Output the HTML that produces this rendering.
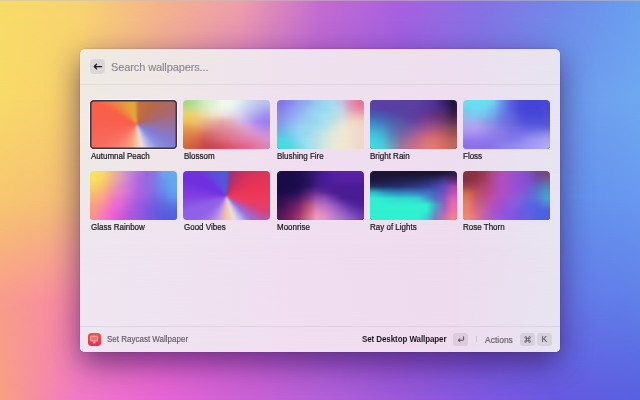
<!DOCTYPE html><html><head><meta charset="utf-8"><style>
html,body{margin:0;padding:0;width:640px;height:400px;overflow:hidden;}
body{position:relative;font-family:"Liberation Sans",sans-serif;background:#b070d8;}
.l,#search,.ft{will-change:transform;}
.ft{transform:scale(1,1.14);transform-origin:0 10.5px;}
.ly{position:absolute;left:0;top:0;width:100%;height:100%;}
#bg{position:absolute;left:0;top:0;width:640px;height:400px;}
#shadow{position:absolute;left:80px;top:48.5px;width:480px;height:303.5px;border-radius:6px;box-shadow:0 8px 32px 0 rgba(60,20,90,0.34), 0 14px 28px -2px rgba(60,20,90,0.46), 0 0 2px rgba(40,20,60,0.25);}
#win{position:absolute;left:80px;top:48.5px;width:480px;height:303.5px;border-radius:5px;overflow:hidden;}
#winbg{position:absolute;left:0;top:0;width:480px;height:303.5px;}
#tint{position:absolute;left:0;top:0;width:480px;height:303.5px;background:rgba(237,234,240,0.9);}
#sep1{position:absolute;left:0;top:35px;width:480px;height:1px;background:rgba(0,0,0,0.06);}
#sep2{position:absolute;left:0;top:277.5px;width:480px;height:1px;background:rgba(0,0,0,0.06);}
#back{position:absolute;left:10.2px;top:10.5px;width:15px;height:15px;border-radius:4px;background:#dcd6d4;}
#search{position:absolute;left:31px;top:11px;font-size:11px;line-height:15px;color:#8a8290;-webkit-text-stroke:0.12px #8a8290;letter-spacing:-0.11px;white-space:nowrap;}
.t{position:absolute;width:87px;height:49px;border-radius:4px;overflow:hidden;}
.l{position:absolute;font-size:8px;line-height:10px;color:#1a1620;-webkit-text-stroke:0.2px #1a1620;transform:scale(1,1.14);transform-origin:0 8px;white-space:nowrap;}
.k{will-change:transform;position:absolute;top:284px;height:13.3px;border-radius:3px;background:rgba(40,20,50,0.085);font-size:8px;line-height:13.3px;text-align:center;color:#4a4450;-webkit-text-stroke:0.2px #4a4450;}
</style></head><body>
<div id="bg"><div class="ly" style="background:linear-gradient(90deg,#f8dc68 0.00%,#f8d470 12.50%,#f4b48a 25.00%,#f0a0a8 37.50%,#c46cd0 50.00%,#a860e0 62.50%,#8870e4 75.00%,#7088e8 87.50%,#68a0f0 100.00%)"></div><div class="ly" style="background:linear-gradient(90deg,#f8da68 0.00%,#f8d070 12.50%,#f0a8a0 25.00%,#d478c8 37.50%,#b464d8 50.00%,#9860e0 62.50%,#7c78e4 75.00%,#6c98ec 87.50%,#70a8f0 100.00%);-webkit-mask-image:linear-gradient(180deg,rgba(0,0,0,0) 0.00%,#000 25.00%);mask-image:linear-gradient(180deg,rgba(0,0,0,0) 0.00%,#000 25.00%)"></div><div class="ly" style="background:linear-gradient(90deg,#f8c670 0.00%,#f4bc78 12.50%,#f090b8 25.00%,#d870d0 37.50%,#b060dc 50.00%,#8c60e0 62.50%,#7070e4 75.00%,#6490ec 87.50%,#6898f0 100.00%);-webkit-mask-image:linear-gradient(180deg,rgba(0,0,0,0) 25.00%,#000 50.00%);mask-image:linear-gradient(180deg,rgba(0,0,0,0) 25.00%,#000 50.00%)"></div><div class="ly" style="background:linear-gradient(90deg,#f89c8c 0.00%,#f888a8 12.50%,#f070d0 25.00%,#d868d8 37.50%,#a860dc 50.00%,#8858e0 62.50%,#6c60e4 75.00%,#6478e8 87.50%,#6080e8 100.00%);-webkit-mask-image:linear-gradient(180deg,rgba(0,0,0,0) 50.00%,#000 75.00%);mask-image:linear-gradient(180deg,rgba(0,0,0,0) 50.00%,#000 75.00%)"></div><div class="ly" style="background:linear-gradient(90deg,#f8a080 0.00%,#f078c8 12.50%,#e664d4 25.00%,#cc60d4 37.50%,#b460d8 50.00%,#9c58d8 62.50%,#8058e0 75.00%,#6858e0 87.50%,#5860e0 100.00%);-webkit-mask-image:linear-gradient(180deg,rgba(0,0,0,0) 75.00%,#000 100.00%);mask-image:linear-gradient(180deg,rgba(0,0,0,0) 75.00%,#000 100.00%)"></div></div>
<div style="position:absolute;left:0;top:0;width:640px;height:1px;background:rgba(200,190,190,0.5)"></div>
<div id="shadow"></div>
<div id="win">
<div id="winbg"><div class="ly" style="background:linear-gradient(90deg,#efebe3 0.00%,#efe8e6 20.00%,#f0e2ee 45.00%,#eedff0 78.00%,#eae2f0 90.00%,#e8e4f2 100.00%)"></div><div class="ly" style="background:linear-gradient(90deg,#efeae4 0.00%,#f0e5ea 20.00%,#f0dff0 45.00%,#eedef0 78.00%,#eae2f0 90.00%,#e8e4f0 100.00%);-webkit-mask-image:linear-gradient(180deg,rgba(0,0,0,0) 0.00%,#000 30.00%);mask-image:linear-gradient(180deg,rgba(0,0,0,0) 0.00%,#000 30.00%)"></div><div class="ly" style="background:linear-gradient(90deg,#eee6f0 0.00%,#efe3f0 20.00%,#f0def0 45.00%,#eedcee 78.00%,#eae0f0 90.00%,#e8e4f0 100.00%);-webkit-mask-image:linear-gradient(180deg,rgba(0,0,0,0) 30.00%,#000 65.00%);mask-image:linear-gradient(180deg,rgba(0,0,0,0) 30.00%,#000 65.00%)"></div><div class="ly" style="background:linear-gradient(90deg,#eee6f0 0.00%,#efe2f0 20.00%,#f0def0 45.00%,#eedcee 78.00%,#eae0f0 90.00%,#e6e4f0 100.00%);-webkit-mask-image:linear-gradient(180deg,rgba(0,0,0,0) 65.00%,#000 100.00%);mask-image:linear-gradient(180deg,rgba(0,0,0,0) 65.00%,#000 100.00%)"></div></div>
<div id="back"></div><svg style="position:absolute;left:0;top:0" width="40" height="36"><path d="M14.2 17.5H21.6M16.5 15.2L14.2 17.5L16.5 19.8" fill="none" stroke="#201828" stroke-width="1.25" stroke-linecap="round" stroke-linejoin="round"/></svg><div id="search">Search wallpapers...</div><div id="sep1"></div>
<div class="t" style="left:10.3px;top:51.2px;box-shadow:0 0 0 1px rgba(255,255,255,0.7)"><div style="position:absolute;left:-6px;top:-6px;right:-6px;bottom:-6px;filter:blur(1.3px);background:conic-gradient(from 0deg at 53.52% 50.00%,#d08c3c 0deg,#c47040 3deg,#b86848 43deg,#b06860 56deg,#a86870 72deg,#9870a0 90deg,#8878c8 111deg,#8080d8 121deg,#9090e0 136deg,#c0c0f0 155deg,#f0e0e0 167deg,#f0c8a0 180deg,#f8a080 197deg,#f88070 220deg,#f87060 235deg,#f86858 251deg,#f86050 270deg,#f86048 300deg,#f08040 312deg,#e8a038 333deg,#e0a838 353deg,#d08c3c 360deg)"></div><div style="position:absolute;left:0;top:0;right:0;bottom:0;border-radius:4px;box-shadow:inset 0 0 0 1.5px #3c3444"></div></div>
<div class="l" style="left:10.8px;top:103.3px">Autumnal Peach</div>
<div class="t" style="left:103.4px;top:51.2px;"><div class="ly" style="background:linear-gradient(90deg,#a8d888 5.00%,#b8e0a0 15.00%,#d0ecc0 25.00%,#e0f0d8 35.00%,#f0f8f0 45.00%,#f0f8f0 55.00%,#e0ecf0 65.00%,#d0d8f0 75.00%,#c0c8f0 85.00%,#b8c0f0 95.00%)"></div><div class="ly" style="background:linear-gradient(90deg,#c8d880 5.00%,#d0e098 15.00%,#e0e8b8 25.00%,#e8f0d8 35.00%,#f0f4e8 45.00%,#e8f0f0 55.00%,#d8e0f0 65.00%,#c8c8f0 75.00%,#b8b8f0 85.00%,#a8a8f0 95.00%);-webkit-mask-image:linear-gradient(180deg,rgba(0,0,0,0) 6.25%,#000 18.75%);mask-image:linear-gradient(180deg,rgba(0,0,0,0) 6.25%,#000 18.75%)"></div><div class="ly" style="background:linear-gradient(90deg,#f0d060 5.00%,#f0d078 15.00%,#f0d8a0 25.00%,#f0e0c0 35.00%,#f0e0d8 45.00%,#e8d8e0 55.00%,#d8d0f0 65.00%,#c0b8f0 75.00%,#b0a0f0 85.00%,#a090f0 95.00%);-webkit-mask-image:linear-gradient(180deg,rgba(0,0,0,0) 18.75%,#000 31.25%);mask-image:linear-gradient(180deg,rgba(0,0,0,0) 18.75%,#000 31.25%)"></div><div class="ly" style="background:linear-gradient(90deg,#f0c050 5.00%,#f0c070 15.00%,#e8b888 25.00%,#e8b0a0 35.00%,#e8a8a8 45.00%,#e0b0c0 55.00%,#d8b8e0 65.00%,#c0a8f0 75.00%,#a888f0 85.00%,#9c80f0 95.00%);-webkit-mask-image:linear-gradient(180deg,rgba(0,0,0,0) 31.25%,#000 43.75%);mask-image:linear-gradient(180deg,rgba(0,0,0,0) 31.25%,#000 43.75%)"></div><div class="ly" style="background:linear-gradient(90deg,#e8a048 5.00%,#e8a060 15.00%,#e09878 25.00%,#e09090 35.00%,#e09098 45.00%,#e098a8 55.00%,#e0a0c0 65.00%,#d8a0d8 75.00%,#c090e8 85.00%,#a888e8 95.00%);-webkit-mask-image:linear-gradient(180deg,rgba(0,0,0,0) 43.75%,#000 56.25%);mask-image:linear-gradient(180deg,rgba(0,0,0,0) 43.75%,#000 56.25%)"></div><div class="ly" style="background:linear-gradient(90deg,#e08848 5.00%,#e08050 15.00%,#d87060 25.00%,#d87078 35.00%,#e07888 45.00%,#e08098 55.00%,#e088a8 65.00%,#e090c0 75.00%,#d890d0 85.00%,#c890e0 95.00%);-webkit-mask-image:linear-gradient(180deg,rgba(0,0,0,0) 56.25%,#000 68.75%);mask-image:linear-gradient(180deg,rgba(0,0,0,0) 56.25%,#000 68.75%)"></div><div class="ly" style="background:linear-gradient(90deg,#d87840 5.00%,#d86848 15.00%,#d05850 25.00%,#d06068 35.00%,#d86878 45.00%,#e07088 55.00%,#e07898 65.00%,#e080a8 75.00%,#e088b8 85.00%,#d890c8 95.00%);-webkit-mask-image:linear-gradient(180deg,rgba(0,0,0,0) 68.75%,#000 81.25%);mask-image:linear-gradient(180deg,rgba(0,0,0,0) 68.75%,#000 81.25%)"></div><div class="ly" style="background:linear-gradient(90deg,#d06840 5.00%,#d05840 15.00%,#c84848 25.00%,#c84858 35.00%,#d05060 45.00%,#d85870 55.00%,#e06080 65.00%,#e06890 75.00%,#e078a0 85.00%,#e080b0 95.00%);-webkit-mask-image:linear-gradient(180deg,rgba(0,0,0,0) 81.25%,#000 93.75%);mask-image:linear-gradient(180deg,rgba(0,0,0,0) 81.25%,#000 93.75%)"></div></div>
<div class="l" style="left:103.9px;top:103.3px">Blossom</div>
<div class="t" style="left:196.5px;top:51.2px;"><div class="ly" style="background:linear-gradient(90deg,#8078e8 5.00%,#8888e8 15.00%,#90a0f0 25.00%,#90b0f0 35.00%,#98c8f0 45.00%,#98d8f0 55.00%,#a8d8f0 65.00%,#c8c0e0 75.00%,#e090b8 85.00%,#e07898 95.00%)"></div><div class="ly" style="background:linear-gradient(90deg,#8480e8 5.00%,#8c98f0 15.00%,#90a8f0 25.00%,#98c0f0 35.00%,#98d0f0 45.00%,#98d8f0 55.00%,#a8e0f0 65.00%,#c8d0e0 75.00%,#e0a0b8 85.00%,#e888a8 95.00%);-webkit-mask-image:linear-gradient(180deg,rgba(0,0,0,0) 6.25%,#000 18.75%);mask-image:linear-gradient(180deg,rgba(0,0,0,0) 6.25%,#000 18.75%)"></div><div class="ly" style="background:linear-gradient(90deg,#8890e8 5.00%,#90a0f0 15.00%,#90b8f0 25.00%,#98c8f0 35.00%,#98d8f0 45.00%,#a0e0f0 55.00%,#b0e0e8 65.00%,#d0d8e0 75.00%,#e8c0c0 85.00%,#f0b0b0 95.00%);-webkit-mask-image:linear-gradient(180deg,rgba(0,0,0,0) 18.75%,#000 31.25%);mask-image:linear-gradient(180deg,rgba(0,0,0,0) 18.75%,#000 31.25%)"></div><div class="ly" style="background:linear-gradient(90deg,#8898e8 5.00%,#90b0f0 15.00%,#98c0f0 25.00%,#98d0f0 35.00%,#98d8f0 45.00%,#a8e0f0 55.00%,#c0e0e0 65.00%,#e0e0d8 75.00%,#f0d8c8 85.00%,#f0d0c0 95.00%);-webkit-mask-image:linear-gradient(180deg,rgba(0,0,0,0) 31.25%,#000 43.75%);mask-image:linear-gradient(180deg,rgba(0,0,0,0) 31.25%,#000 43.75%)"></div><div class="ly" style="background:linear-gradient(90deg,#78a8e8 5.00%,#88c0f0 15.00%,#98d0f0 25.00%,#98d8f0 35.00%,#a0e0f0 45.00%,#b8e0e8 55.00%,#d0e8e0 65.00%,#e8e8d8 75.00%,#f0e0d0 85.00%,#f0d8c8 95.00%);-webkit-mask-image:linear-gradient(180deg,rgba(0,0,0,0) 43.75%,#000 56.25%);mask-image:linear-gradient(180deg,rgba(0,0,0,0) 43.75%,#000 56.25%)"></div><div class="ly" style="background:linear-gradient(90deg,#60c0e0 5.00%,#78c8f0 15.00%,#90d8f0 25.00%,#98d8f0 35.00%,#b0e0e8 45.00%,#c8e8e0 55.00%,#e0e8d8 65.00%,#f0e8d0 75.00%,#f0e0d0 85.00%,#f0d8c8 95.00%);-webkit-mask-image:linear-gradient(180deg,rgba(0,0,0,0) 56.25%,#000 68.75%);mask-image:linear-gradient(180deg,rgba(0,0,0,0) 56.25%,#000 68.75%)"></div><div class="ly" style="background:linear-gradient(90deg,#48d8e0 5.00%,#68d0e8 15.00%,#88d8f0 25.00%,#a0e0f0 35.00%,#b8e0e8 45.00%,#d0e8e0 55.00%,#e8e8d8 65.00%,#f0e8d0 75.00%,#f0e0d0 85.00%,#f0d8c8 95.00%);-webkit-mask-image:linear-gradient(180deg,rgba(0,0,0,0) 68.75%,#000 81.25%);mask-image:linear-gradient(180deg,rgba(0,0,0,0) 68.75%,#000 81.25%)"></div><div class="ly" style="background:linear-gradient(90deg,#40e0e0 5.00%,#50d8e0 15.00%,#78d8e8 25.00%,#98e0f0 35.00%,#b8e0e8 45.00%,#d0e8e0 55.00%,#e8e8d8 65.00%,#f0e8d0 75.00%,#f0e0d0 85.00%,#f0d8c8 95.00%);-webkit-mask-image:linear-gradient(180deg,rgba(0,0,0,0) 81.25%,#000 93.75%);mask-image:linear-gradient(180deg,rgba(0,0,0,0) 81.25%,#000 93.75%)"></div></div>
<div class="l" style="left:197.0px;top:103.3px">Blushing Fire</div>
<div class="t" style="left:289.6px;top:51.2px;"><div class="ly" style="background:linear-gradient(90deg,#5a40a0 5.00%,#5a40a0 15.00%,#5a40a0 25.00%,#5a40a0 35.00%,#5a40a0 45.00%,#5840a0 55.00%,#5438a0 65.00%,#4c3090 75.00%,#382070 85.00%,#201838 95.00%)"></div><div class="ly" style="background:linear-gradient(90deg,#5048a8 5.00%,#5540a8 15.00%,#5840a0 25.00%,#5840a0 35.00%,#5840a0 45.00%,#5a3c9c 55.00%,#5a3898 65.00%,#543088 75.00%,#482878 85.00%,#2a1a48 95.00%);-webkit-mask-image:linear-gradient(180deg,rgba(0,0,0,0) 6.25%,#000 18.75%);mask-image:linear-gradient(180deg,rgba(0,0,0,0) 6.25%,#000 18.75%)"></div><div class="ly" style="background:linear-gradient(90deg,#4860b0 5.00%,#4c58b0 15.00%,#5050a8 25.00%,#5448a0 35.00%,#5840a0 45.00%,#603c98 55.00%,#6a3890 65.00%,#683078 75.00%,#583068 85.00%,#402040 95.00%);-webkit-mask-image:linear-gradient(180deg,rgba(0,0,0,0) 18.75%,#000 31.25%);mask-image:linear-gradient(180deg,rgba(0,0,0,0) 18.75%,#000 31.25%)"></div><div class="ly" style="background:linear-gradient(90deg,#4080c0 5.00%,#4870b8 15.00%,#5060b0 25.00%,#5858a8 35.00%,#6048a0 45.00%,#704098 55.00%,#804090 65.00%,#804080 75.00%,#703870 85.00%,#603050 95.00%);-webkit-mask-image:linear-gradient(180deg,rgba(0,0,0,0) 31.25%,#000 43.75%);mask-image:linear-gradient(180deg,rgba(0,0,0,0) 31.25%,#000 43.75%)"></div><div class="ly" style="background:linear-gradient(90deg,#40a0d0 5.00%,#4890c8 15.00%,#5070b8 25.00%,#6060a8 35.00%,#7058a0 45.00%,#8850a0 55.00%,#985090 65.00%,#a05080 75.00%,#905068 85.00%,#804858 95.00%);-webkit-mask-image:linear-gradient(180deg,rgba(0,0,0,0) 43.75%,#000 56.25%);mask-image:linear-gradient(180deg,rgba(0,0,0,0) 43.75%,#000 56.25%)"></div><div class="ly" style="background:linear-gradient(90deg,#40c0d8 5.00%,#48a8d0 15.00%,#5880b8 25.00%,#7068a8 35.00%,#8860a0 45.00%,#a86090 55.00%,#c06080 65.00%,#c86070 75.00%,#b85860 85.00%,#a05050 95.00%);-webkit-mask-image:linear-gradient(180deg,rgba(0,0,0,0) 56.25%,#000 68.75%);mask-image:linear-gradient(180deg,rgba(0,0,0,0) 56.25%,#000 68.75%)"></div><div class="ly" style="background:linear-gradient(90deg,#40d0e0 5.00%,#48c0d8 15.00%,#6090b8 25.00%,#8870a0 35.00%,#a86898 45.00%,#c06888 55.00%,#d87078 65.00%,#d87070 75.00%,#c86860 85.00%,#b86058 95.00%);-webkit-mask-image:linear-gradient(180deg,rgba(0,0,0,0) 68.75%,#000 81.25%);mask-image:linear-gradient(180deg,rgba(0,0,0,0) 68.75%,#000 81.25%)"></div><div class="ly" style="background:linear-gradient(90deg,#40d8e0 5.00%,#50c8d8 15.00%,#70a0b8 25.00%,#9878a0 35.00%,#b87090 45.00%,#d07080 55.00%,#e07878 65.00%,#e07870 75.00%,#d07060 85.00%,#c06858 95.00%);-webkit-mask-image:linear-gradient(180deg,rgba(0,0,0,0) 81.25%,#000 93.75%);mask-image:linear-gradient(180deg,rgba(0,0,0,0) 81.25%,#000 93.75%)"></div></div>
<div class="l" style="left:290.1px;top:103.3px">Bright Rain</div>
<div class="t" style="left:382.7px;top:51.2px;"><div class="ly" style="background:linear-gradient(90deg,#68e0f0 5.00%,#68e0f0 15.00%,#68e0f0 25.00%,#70d0f0 35.00%,#6890e8 45.00%,#5860e0 55.00%,#4848d8 65.00%,#4444d8 75.00%,#4444d8 85.00%,#4848d8 95.00%)"></div><div class="ly" style="background:linear-gradient(90deg,#70d0f0 5.00%,#70d8f0 15.00%,#70d0f0 25.00%,#70b8f0 35.00%,#6888e8 45.00%,#5860e0 55.00%,#4848d8 65.00%,#4444d8 75.00%,#4444d8 85.00%,#4848d8 95.00%);-webkit-mask-image:linear-gradient(180deg,rgba(0,0,0,0) 6.25%,#000 18.75%);mask-image:linear-gradient(180deg,rgba(0,0,0,0) 6.25%,#000 18.75%)"></div><div class="ly" style="background:linear-gradient(90deg,#88c0f0 5.00%,#80c8f0 15.00%,#78c0f0 25.00%,#70a8e8 35.00%,#6880e0 45.00%,#6068e0 55.00%,#5050d8 65.00%,#4848d8 75.00%,#4848d8 85.00%,#4c4cd8 95.00%);-webkit-mask-image:linear-gradient(180deg,rgba(0,0,0,0) 18.75%,#000 31.25%);mask-image:linear-gradient(180deg,rgba(0,0,0,0) 18.75%,#000 31.25%)"></div><div class="ly" style="background:linear-gradient(90deg,#a0b0f0 5.00%,#a0b0f0 15.00%,#90a0e8 25.00%,#8090e8 35.00%,#7078e0 45.00%,#6868e0 55.00%,#5858d8 65.00%,#5050d8 75.00%,#5050d8 85.00%,#5050d8 95.00%);-webkit-mask-image:linear-gradient(180deg,rgba(0,0,0,0) 31.25%,#000 43.75%);mask-image:linear-gradient(180deg,rgba(0,0,0,0) 31.25%,#000 43.75%)"></div><div class="ly" style="background:linear-gradient(90deg,#b0a0f0 5.00%,#b0a0f0 15.00%,#a098f0 25.00%,#9088e8 35.00%,#8078e8 45.00%,#7070e0 55.00%,#6868e0 65.00%,#6060e0 75.00%,#6060e0 85.00%,#6060e0 95.00%);-webkit-mask-image:linear-gradient(180deg,rgba(0,0,0,0) 43.75%,#000 56.25%);mask-image:linear-gradient(180deg,rgba(0,0,0,0) 43.75%,#000 56.25%)"></div><div class="ly" style="background:linear-gradient(90deg,#a890f0 5.00%,#a890f0 15.00%,#9c88f0 25.00%,#9080e8 35.00%,#8878e8 45.00%,#8070e8 55.00%,#7c70e8 65.00%,#7c78e8 75.00%,#8080e8 85.00%,#8888f0 95.00%);-webkit-mask-image:linear-gradient(180deg,rgba(0,0,0,0) 56.25%,#000 68.75%);mask-image:linear-gradient(180deg,rgba(0,0,0,0) 56.25%,#000 68.75%)"></div><div class="ly" style="background:linear-gradient(90deg,#9878f0 5.00%,#9878f0 15.00%,#9078f0 25.00%,#8c78f0 35.00%,#8878e8 45.00%,#8478e8 55.00%,#8880f0 65.00%,#9890f0 75.00%,#a098f0 85.00%,#a8a0f0 95.00%);-webkit-mask-image:linear-gradient(180deg,rgba(0,0,0,0) 68.75%,#000 81.25%);mask-image:linear-gradient(180deg,rgba(0,0,0,0) 68.75%,#000 81.25%)"></div><div class="ly" style="background:linear-gradient(90deg,#8c70e8 5.00%,#8c70e8 15.00%,#8870e8 25.00%,#8878e8 35.00%,#8c80f0 45.00%,#9088f0 55.00%,#9890f0 65.00%,#a098f0 75.00%,#a8a0f0 85.00%,#b0a8f0 95.00%);-webkit-mask-image:linear-gradient(180deg,rgba(0,0,0,0) 81.25%,#000 93.75%);mask-image:linear-gradient(180deg,rgba(0,0,0,0) 81.25%,#000 93.75%)"></div></div>
<div class="l" style="left:383.2px;top:103.3px">Floss</div>
<div class="t" style="left:10.3px;top:122.5px;"><div class="ly" style="background:linear-gradient(90deg,#f8e060 5.00%,#f8d868 15.00%,#f0b888 25.00%,#e0a0b0 35.00%,#c888d0 45.00%,#b070e0 55.00%,#9868e0 65.00%,#8878e0 75.00%,#70a0f0 85.00%,#68a8f0 95.00%)"></div><div class="ly" style="background:linear-gradient(90deg,#f8e060 5.00%,#f8d068 15.00%,#f0b090 25.00%,#e098b8 35.00%,#c880d8 45.00%,#b068e0 55.00%,#9868e0 65.00%,#8078e8 75.00%,#6898f0 85.00%,#60a8f0 95.00%);-webkit-mask-image:linear-gradient(180deg,rgba(0,0,0,0) 6.25%,#000 18.75%);mask-image:linear-gradient(180deg,rgba(0,0,0,0) 6.25%,#000 18.75%)"></div><div class="ly" style="background:linear-gradient(90deg,#f8d068 5.00%,#f8c070 15.00%,#f0a098 25.00%,#e088c0 35.00%,#c878d8 45.00%,#b068e0 55.00%,#9868e0 65.00%,#8078e8 75.00%,#6890f0 85.00%,#60a8f0 95.00%);-webkit-mask-image:linear-gradient(180deg,rgba(0,0,0,0) 18.75%,#000 31.25%);mask-image:linear-gradient(180deg,rgba(0,0,0,0) 18.75%,#000 31.25%)"></div><div class="ly" style="background:linear-gradient(90deg,#f8c070 5.00%,#f8b080 15.00%,#f090a8 25.00%,#e880c8 35.00%,#d070d8 45.00%,#b060e0 55.00%,#9868e0 65.00%,#7c70e8 75.00%,#6888f0 85.00%,#60a0f0 95.00%);-webkit-mask-image:linear-gradient(180deg,rgba(0,0,0,0) 31.25%,#000 43.75%);mask-image:linear-gradient(180deg,rgba(0,0,0,0) 31.25%,#000 43.75%)"></div><div class="ly" style="background:linear-gradient(90deg,#f8b078 5.00%,#f8a090 15.00%,#f080b8 25.00%,#e070d0 35.00%,#c868d8 45.00%,#a860e0 55.00%,#9060e0 65.00%,#7468e0 75.00%,#6478e8 85.00%,#6090f0 95.00%);-webkit-mask-image:linear-gradient(180deg,rgba(0,0,0,0) 43.75%,#000 56.25%);mask-image:linear-gradient(180deg,rgba(0,0,0,0) 43.75%,#000 56.25%)"></div><div class="ly" style="background:linear-gradient(90deg,#f8a080 5.00%,#f890a0 15.00%,#f070c8 25.00%,#e068d8 35.00%,#c060d8 45.00%,#a058e0 55.00%,#8858e0 65.00%,#7060e0 75.00%,#6068e0 85.00%,#5878e8 95.00%);-webkit-mask-image:linear-gradient(180deg,rgba(0,0,0,0) 56.25%,#000 68.75%);mask-image:linear-gradient(180deg,rgba(0,0,0,0) 56.25%,#000 68.75%)"></div><div class="ly" style="background:linear-gradient(90deg,#f89888 5.00%,#f880b0 15.00%,#f068d0 25.00%,#d860d8 35.00%,#b858d8 45.00%,#9c58e0 55.00%,#8058e0 65.00%,#6c58e0 75.00%,#5c60e0 85.00%,#5068e0 95.00%);-webkit-mask-image:linear-gradient(180deg,rgba(0,0,0,0) 68.75%,#000 81.25%);mask-image:linear-gradient(180deg,rgba(0,0,0,0) 68.75%,#000 81.25%)"></div><div class="ly" style="background:linear-gradient(90deg,#f89090 5.00%,#f878c0 15.00%,#f060d8 25.00%,#d058d8 35.00%,#b058d8 45.00%,#9858e0 55.00%,#7c58e0 65.00%,#6858e0 75.00%,#5858e0 85.00%,#5060e0 95.00%);-webkit-mask-image:linear-gradient(180deg,rgba(0,0,0,0) 81.25%,#000 93.75%);mask-image:linear-gradient(180deg,rgba(0,0,0,0) 81.25%,#000 93.75%)"></div></div>
<div class="l" style="left:10.8px;top:174.6px">Glass Rainbow</div>
<div class="t" style="left:103.4px;top:122.5px;"><div style="position:absolute;left:-6px;top:-6px;right:-6px;bottom:-6px;filter:blur(1.3px);background:conic-gradient(from 0deg at 50.00% 51.61%,#5058d8 0deg,#5058d8 2deg,#a03078 9deg,#b03070 19deg,#d83058 45deg,#f03858 90deg,#e04070 110deg,#c050a0 119deg,#9870e0 134deg,#c0c0f0 150deg,#f0e0e0 161deg,#f0d0a8 173deg,#f0b8b0 186deg,#c0a0e0 199deg,#a070e8 219deg,#9060e8 234deg,#9060e8 250deg,#8040e0 270deg,#7030e0 292deg,#7030e0 310deg,#6048e0 326deg,#5058d8 350deg,#5058d8 360deg)"></div></div>
<div class="l" style="left:103.9px;top:174.6px">Good Vibes</div>
<div class="t" style="left:196.5px;top:122.5px;"><div class="ly" style="background:linear-gradient(90deg,#1a0c48 5.00%,#1a0c48 15.00%,#1c0e50 25.00%,#281460 35.00%,#381a80 45.00%,#4a1c98 55.00%,#5420a0 65.00%,#5820a8 75.00%,#5a20a8 85.00%,#5a20a8 95.00%)"></div><div class="ly" style="background:linear-gradient(90deg,#180c48 5.00%,#1a0c48 15.00%,#1c0e50 25.00%,#241258 35.00%,#3a1a80 45.00%,#4a1c98 55.00%,#5020a0 65.00%,#5420a0 75.00%,#5420a0 85.00%,#5220a0 95.00%);-webkit-mask-image:linear-gradient(180deg,rgba(0,0,0,0) 6.25%,#000 18.75%);mask-image:linear-gradient(180deg,rgba(0,0,0,0) 6.25%,#000 18.75%)"></div><div class="ly" style="background:linear-gradient(90deg,#180c48 5.00%,#1a0c48 15.00%,#1e0e50 25.00%,#2a1460 35.00%,#401a88 45.00%,#4c1c98 55.00%,#501c98 65.00%,#4c1c98 75.00%,#4c1c98 85.00%,#4c1c98 95.00%);-webkit-mask-image:linear-gradient(180deg,rgba(0,0,0,0) 18.75%,#000 31.25%);mask-image:linear-gradient(180deg,rgba(0,0,0,0) 18.75%,#000 31.25%)"></div><div class="ly" style="background:linear-gradient(90deg,#1c0c48 5.00%,#1e0e50 15.00%,#281258 25.00%,#502070 35.00%,#683090 45.00%,#5c2898 55.00%,#4c1c90 65.00%,#481c90 75.00%,#4a1c98 85.00%,#4a1c98 95.00%);-webkit-mask-image:linear-gradient(180deg,rgba(0,0,0,0) 31.25%,#000 43.75%);mask-image:linear-gradient(180deg,rgba(0,0,0,0) 31.25%,#000 43.75%)"></div><div class="ly" style="background:linear-gradient(90deg,#2a1050 5.00%,#381458 15.00%,#501868 25.00%,#7a3078 35.00%,#9a50b0 45.00%,#9050b8 55.00%,#6a38a8 65.00%,#4c2090 75.00%,#4a1c90 85.00%,#4a1c98 95.00%);-webkit-mask-image:linear-gradient(180deg,rgba(0,0,0,0) 43.75%,#000 56.25%);mask-image:linear-gradient(180deg,rgba(0,0,0,0) 43.75%,#000 56.25%)"></div><div class="ly" style="background:linear-gradient(90deg,#3c1050 5.00%,#541860 15.00%,#782468 25.00%,#b04878 35.00%,#c070b0 45.00%,#b070c0 55.00%,#9858c0 65.00%,#7040b0 75.00%,#5828a0 85.00%,#4c2098 95.00%);-webkit-mask-image:linear-gradient(180deg,rgba(0,0,0,0) 56.25%,#000 68.75%);mask-image:linear-gradient(180deg,rgba(0,0,0,0) 56.25%,#000 68.75%)"></div><div class="ly" style="background:linear-gradient(90deg,#4c1458 5.00%,#6a1c60 15.00%,#902c68 25.00%,#c05878 35.00%,#e088b8 45.00%,#d080c0 55.00%,#b070c8 65.00%,#9058c0 75.00%,#7040b0 85.00%,#6030a8 95.00%);-webkit-mask-image:linear-gradient(180deg,rgba(0,0,0,0) 68.75%,#000 81.25%);mask-image:linear-gradient(180deg,rgba(0,0,0,0) 68.75%,#000 81.25%)"></div><div class="ly" style="background:linear-gradient(90deg,#581860 5.00%,#7a2060 15.00%,#a03868 25.00%,#d06888 35.00%,#f098c0 45.00%,#e090c8 55.00%,#c080d0 65.00%,#a070c8 75.00%,#8858c0 85.00%,#7040b8 95.00%);-webkit-mask-image:linear-gradient(180deg,rgba(0,0,0,0) 81.25%,#000 93.75%);mask-image:linear-gradient(180deg,rgba(0,0,0,0) 81.25%,#000 93.75%)"></div></div>
<div class="l" style="left:197.0px;top:174.6px">Moonrise</div>
<div class="t" style="left:289.6px;top:122.5px;"><div class="ly" style="background:linear-gradient(90deg,#1c1434 5.00%,#1c1434 15.00%,#1c1434 25.00%,#1c1434 35.00%,#1c1434 45.00%,#1c1434 55.00%,#1c1434 65.00%,#1c1434 75.00%,#201840 85.00%,#281c48 95.00%)"></div><div class="ly" style="background:linear-gradient(90deg,#1c1838 5.00%,#1c1a40 15.00%,#1e1c48 25.00%,#201e50 35.00%,#222050 45.00%,#242458 55.00%,#282860 65.00%,#303070 75.00%,#403888 85.00%,#602878 95.00%);-webkit-mask-image:linear-gradient(180deg,rgba(0,0,0,0) 6.25%,#000 18.75%);mask-image:linear-gradient(180deg,rgba(0,0,0,0) 6.25%,#000 18.75%)"></div><div class="ly" style="background:linear-gradient(90deg,#203060 5.00%,#202c60 15.00%,#243068 25.00%,#283070 35.00%,#2c3478 45.00%,#303880 55.00%,#383c90 65.00%,#4048a8 75.00%,#6048b8 85.00%,#a048a8 95.00%);-webkit-mask-image:linear-gradient(180deg,rgba(0,0,0,0) 18.75%,#000 31.25%);mask-image:linear-gradient(180deg,rgba(0,0,0,0) 18.75%,#000 31.25%)"></div><div class="ly" style="background:linear-gradient(90deg,#30b8c8 5.00%,#2c98c0 15.00%,#2c88b8 25.00%,#3080b8 35.00%,#3480c0 45.00%,#3878c0 55.00%,#4070c8 65.00%,#4860c0 75.00%,#7050c0 85.00%,#c050b0 95.00%);-webkit-mask-image:linear-gradient(180deg,rgba(0,0,0,0) 31.25%,#000 43.75%);mask-image:linear-gradient(180deg,rgba(0,0,0,0) 31.25%,#000 43.75%)"></div><div class="ly" style="background:linear-gradient(90deg,#30f0d0 5.00%,#30e8d0 15.00%,#30e0d0 25.00%,#30d8d0 35.00%,#30d8d0 45.00%,#38d0d0 55.00%,#40a0c8 65.00%,#5070c0 75.00%,#8858c0 85.00%,#e060b0 95.00%);-webkit-mask-image:linear-gradient(180deg,rgba(0,0,0,0) 43.75%,#000 56.25%);mask-image:linear-gradient(180deg,rgba(0,0,0,0) 43.75%,#000 56.25%)"></div><div class="ly" style="background:linear-gradient(90deg,#30f0d0 5.00%,#30f0d0 15.00%,#30f0d0 25.00%,#30f0d0 35.00%,#30f0d0 45.00%,#30f0d0 55.00%,#30f0d0 65.00%,#48a8c8 75.00%,#9060c0 85.00%,#f068a8 95.00%);-webkit-mask-image:linear-gradient(180deg,rgba(0,0,0,0) 56.25%,#000 68.75%);mask-image:linear-gradient(180deg,rgba(0,0,0,0) 56.25%,#000 68.75%)"></div><div class="ly" style="background:linear-gradient(90deg,#30f0d0 5.00%,#30f0d0 15.00%,#30f0d0 25.00%,#30f0d0 35.00%,#30f0d0 45.00%,#30f0d0 55.00%,#30f0d0 65.00%,#5898c8 75.00%,#a868b8 85.00%,#f070a0 95.00%);-webkit-mask-image:linear-gradient(180deg,rgba(0,0,0,0) 68.75%,#000 81.25%);mask-image:linear-gradient(180deg,rgba(0,0,0,0) 68.75%,#000 81.25%)"></div><div class="ly" style="background:linear-gradient(90deg,#30f0d0 5.00%,#30f0d0 15.00%,#30f0d0 25.00%,#30f0d0 35.00%,#30f0d0 45.00%,#30f0d0 55.00%,#40d0d0 65.00%,#7880c0 75.00%,#c070b0 85.00%,#f88088 95.00%);-webkit-mask-image:linear-gradient(180deg,rgba(0,0,0,0) 81.25%,#000 93.75%);mask-image:linear-gradient(180deg,rgba(0,0,0,0) 81.25%,#000 93.75%)"></div></div>
<div class="l" style="left:290.1px;top:174.6px">Ray of Lights</div>
<div class="t" style="left:382.7px;top:122.5px;"><div class="ly" style="background:linear-gradient(90deg,#883040 5.00%,#903040 15.00%,#a03858 25.00%,#b04890 35.00%,#b050b8 45.00%,#a050c8 55.00%,#9050d0 65.00%,#8050c8 75.00%,#704898 85.00%,#784880 95.00%)"></div><div class="ly" style="background:linear-gradient(90deg,#883040 5.00%,#903848 15.00%,#a83c68 25.00%,#b04898 35.00%,#b050c0 45.00%,#a050c8 55.00%,#9050d0 65.00%,#8050d0 75.00%,#6c50b0 85.00%,#6860a0 95.00%);-webkit-mask-image:linear-gradient(180deg,rgba(0,0,0,0) 6.25%,#000 18.75%);mask-image:linear-gradient(180deg,rgba(0,0,0,0) 6.25%,#000 18.75%)"></div><div class="ly" style="background:linear-gradient(90deg,#a04048 5.00%,#a84058 15.00%,#b04470 25.00%,#b04aa0 35.00%,#b050c0 45.00%,#a050d0 55.00%,#9050d8 65.00%,#7c58d8 75.00%,#6068c0 85.00%,#5880b0 95.00%);-webkit-mask-image:linear-gradient(180deg,rgba(0,0,0,0) 18.75%,#000 31.25%);mask-image:linear-gradient(180deg,rgba(0,0,0,0) 18.75%,#000 31.25%)"></div><div class="ly" style="background:linear-gradient(90deg,#d06848 5.00%,#c05060 15.00%,#b84878 25.00%,#b84aa8 35.00%,#b050c0 45.00%,#a050d0 55.00%,#8c58d8 65.00%,#7060d8 75.00%,#5878c8 85.00%,#4898c8 95.00%);-webkit-mask-image:linear-gradient(180deg,rgba(0,0,0,0) 31.25%,#000 43.75%);mask-image:linear-gradient(180deg,rgba(0,0,0,0) 31.25%,#000 43.75%)"></div><div class="ly" style="background:linear-gradient(90deg,#e07850 5.00%,#c85870 15.00%,#c05088 25.00%,#b850b0 35.00%,#a850c8 45.00%,#9858d8 55.00%,#8060e0 65.00%,#6868e0 75.00%,#5878d8 85.00%,#48a0d0 95.00%);-webkit-mask-image:linear-gradient(180deg,rgba(0,0,0,0) 43.75%,#000 56.25%);mask-image:linear-gradient(180deg,rgba(0,0,0,0) 43.75%,#000 56.25%)"></div><div class="ly" style="background:linear-gradient(90deg,#e88060 5.00%,#d06080 15.00%,#c05898 25.00%,#b050c0 35.00%,#a050d0 45.00%,#9058e0 55.00%,#7860e0 65.00%,#6060e0 75.00%,#5068e0 85.00%,#5080d8 95.00%);-webkit-mask-image:linear-gradient(180deg,rgba(0,0,0,0) 56.25%,#000 68.75%);mask-image:linear-gradient(180deg,rgba(0,0,0,0) 56.25%,#000 68.75%)"></div><div class="ly" style="background:linear-gradient(90deg,#f08068 5.00%,#d86888 15.00%,#c060a8 25.00%,#a850c8 35.00%,#9850d8 45.00%,#8858e0 55.00%,#7058e0 65.00%,#6060e0 75.00%,#5060e0 85.00%,#5060e0 95.00%);-webkit-mask-image:linear-gradient(180deg,rgba(0,0,0,0) 68.75%,#000 81.25%);mask-image:linear-gradient(180deg,rgba(0,0,0,0) 68.75%,#000 81.25%)"></div><div class="ly" style="background:linear-gradient(90deg,#f08870 5.00%,#e07090 15.00%,#c060b0 25.00%,#a858d0 35.00%,#9058d8 45.00%,#8058e0 55.00%,#7058e0 65.00%,#6060e0 75.00%,#5060e0 85.00%,#4c60e0 95.00%);-webkit-mask-image:linear-gradient(180deg,rgba(0,0,0,0) 81.25%,#000 93.75%);mask-image:linear-gradient(180deg,rgba(0,0,0,0) 81.25%,#000 93.75%)"></div></div>
<div class="l" style="left:383.2px;top:174.6px">Rose Thorn</div>
<div id="sep2"></div>
<div style="position:absolute;left:7.8px;top:284.2px;width:13.3px;height:13.3px;border-radius:3.5px;background:linear-gradient(180deg,#f45040,#e43058)"></div><svg style="position:absolute;left:0;top:270px" width="40" height="34"><rect x="10.7" y="17.0" width="7.0" height="5.0" rx="0.6" fill="rgba(255,190,200,0.35)" stroke="rgba(255,220,220,0.85)" stroke-width="0.75"/><path d="M14.2 22.2V23.6M12.9 23.8H15.5" stroke="#ffd8d8" stroke-width="0.8" fill="none"/></svg>
<div class="ft" style="position:absolute;left:27px;top:284px;font-size:8px;line-height:14px;color:#5e5862;-webkit-text-stroke:0.12px #5e5862;white-space:nowrap">Set Raycast Wallpaper</div>
<div class="ft" style="position:absolute;left:281.5px;top:284px;font-size:8px;line-height:14px;color:#1c1820;font-weight:bold;letter-spacing:-0.09px;white-space:nowrap">Set Desktop Wallpaper</div>
<div class="k" style="left:373.3px;width:14.8px"></div><svg style="position:absolute;left:370px;top:280px" width="24" height="20"><path d="M13.6 7.8V10.6Q13.6 11.2 13 11.2H8.4M10 9.6L8.3 11.2L10 12.8" fill="none" stroke="#3e3846" stroke-width="0.9" stroke-linecap="round" stroke-linejoin="round"/></svg>
<div style="position:absolute;left:396.4px;top:287.5px;width:0.8px;height:6px;background:rgba(0,0,0,0.13)"></div>
<div class="ft" style="position:absolute;left:405.2px;top:284px;font-size:8.5px;line-height:14px;color:#5e5862;-webkit-text-stroke:0.12px #5e5862;white-space:nowrap">Actions</div>
<div class="k" style="left:440.1px;width:15px"></div><svg style="position:absolute;left:440px;top:284px" width="16" height="14"><path transform="translate(7.6 6.5) scale(0.8) translate(-7.6 -6.8)" d="M6.2 5.4H9M6.2 8.2H9M6.2 5.4V8.2M9 5.4V8.2M6.2 5.4H5.3A1.1 1.1 0 1 1 6.4 4.3V5.4M9 5.4V4.3A1.1 1.1 0 1 1 10.1 5.4H9M9 8.2H10.1A1.1 1.1 0 1 1 9 9.3V8.2M6.2 8.2V9.3A1.1 1.1 0 1 1 5.1 8.2H6.2" fill="none" stroke="#55505c" stroke-width="1.05"/></svg>
<div class="k" style="left:457.3px;width:14.6px;font-size:8.5px;color:#58525e;-webkit-text-stroke:0.15px #58525e">K</div>
</div></body></html>
